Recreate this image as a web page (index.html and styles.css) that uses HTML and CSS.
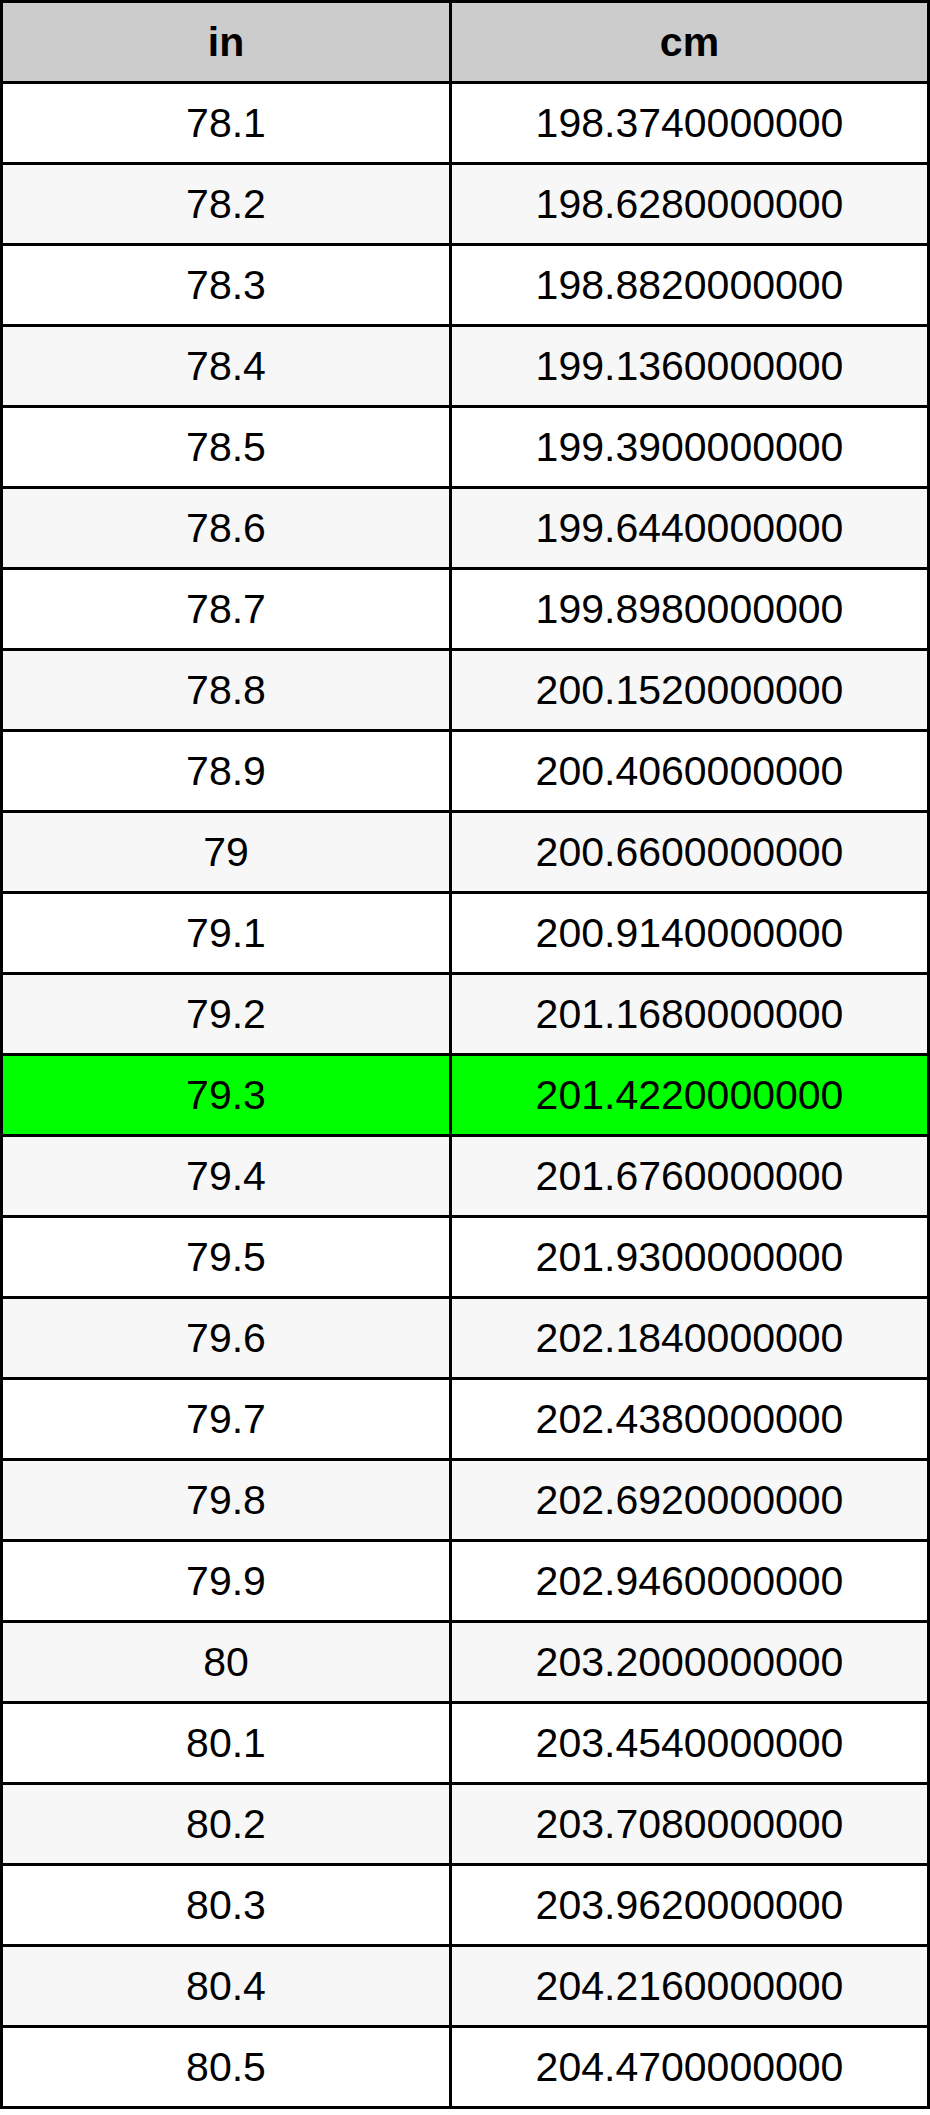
FILE: index.html
```html
<!DOCTYPE html>
<html>
<head>
<meta charset="utf-8">
<link rel="stylesheet" href="styles.css">
</head>
<body>
<table class="conv">
<thead>
<tr><th class="c-in">in</th><th class="c-cm">cm</th></tr>
</thead>
<tbody>
<tr><td>78.1</td><td>198.3740000000</td></tr>
<tr class="alt"><td>78.2</td><td>198.6280000000</td></tr>
<tr><td>78.3</td><td>198.8820000000</td></tr>
<tr class="alt"><td>78.4</td><td>199.1360000000</td></tr>
<tr><td>78.5</td><td>199.3900000000</td></tr>
<tr class="alt"><td>78.6</td><td>199.6440000000</td></tr>
<tr><td>78.7</td><td>199.8980000000</td></tr>
<tr class="alt"><td>78.8</td><td>200.1520000000</td></tr>
<tr><td>78.9</td><td>200.4060000000</td></tr>
<tr class="alt"><td>79</td><td>200.6600000000</td></tr>
<tr><td>79.1</td><td>200.9140000000</td></tr>
<tr class="alt"><td>79.2</td><td>201.1680000000</td></tr>
<tr class="hl"><td>79.3</td><td>201.4220000000</td></tr>
<tr class="alt"><td>79.4</td><td>201.6760000000</td></tr>
<tr><td>79.5</td><td>201.9300000000</td></tr>
<tr class="alt"><td>79.6</td><td>202.1840000000</td></tr>
<tr><td>79.7</td><td>202.4380000000</td></tr>
<tr class="alt"><td>79.8</td><td>202.6920000000</td></tr>
<tr><td>79.9</td><td>202.9460000000</td></tr>
<tr class="alt"><td>80</td><td>203.2000000000</td></tr>
<tr><td>80.1</td><td>203.4540000000</td></tr>
<tr class="alt"><td>80.2</td><td>203.7080000000</td></tr>
<tr><td>80.3</td><td>203.9620000000</td></tr>
<tr class="alt"><td>80.4</td><td>204.2160000000</td></tr>
<tr><td>80.5</td><td>204.4700000000</td></tr>
</tbody>
</table>
</body>
</html>
```

FILE: styles.css
```css
html, body {
  margin: 0;
  padding: 0;
  background: #ffffff;
}
.conv {
  width: 930px;
  border-collapse: separate;
  border-spacing: 0;
  border-top: 3px solid #000;
  border-left: 3px solid #000;
  table-layout: fixed;
  font-family: "Liberation Sans", Arial, sans-serif;
  font-size: 41px;
  color: #000;
}
.conv th,
.conv td {
  border-right: 3px solid #000;
  border-bottom: 3px solid #000;
  padding: 0;
  height: 78px;
  text-align: center;
  vertical-align: middle;
  line-height: 1;
  background: #ffffff;
}
.conv th {
  background: #cccccc;
  font-weight: bold;
}
.conv .c-in {
  width: 446px;
}
.conv tr.alt td {
  background: #f7f7f7;
}
.conv tr.hl td {
  background: #00ff00;
}
```
